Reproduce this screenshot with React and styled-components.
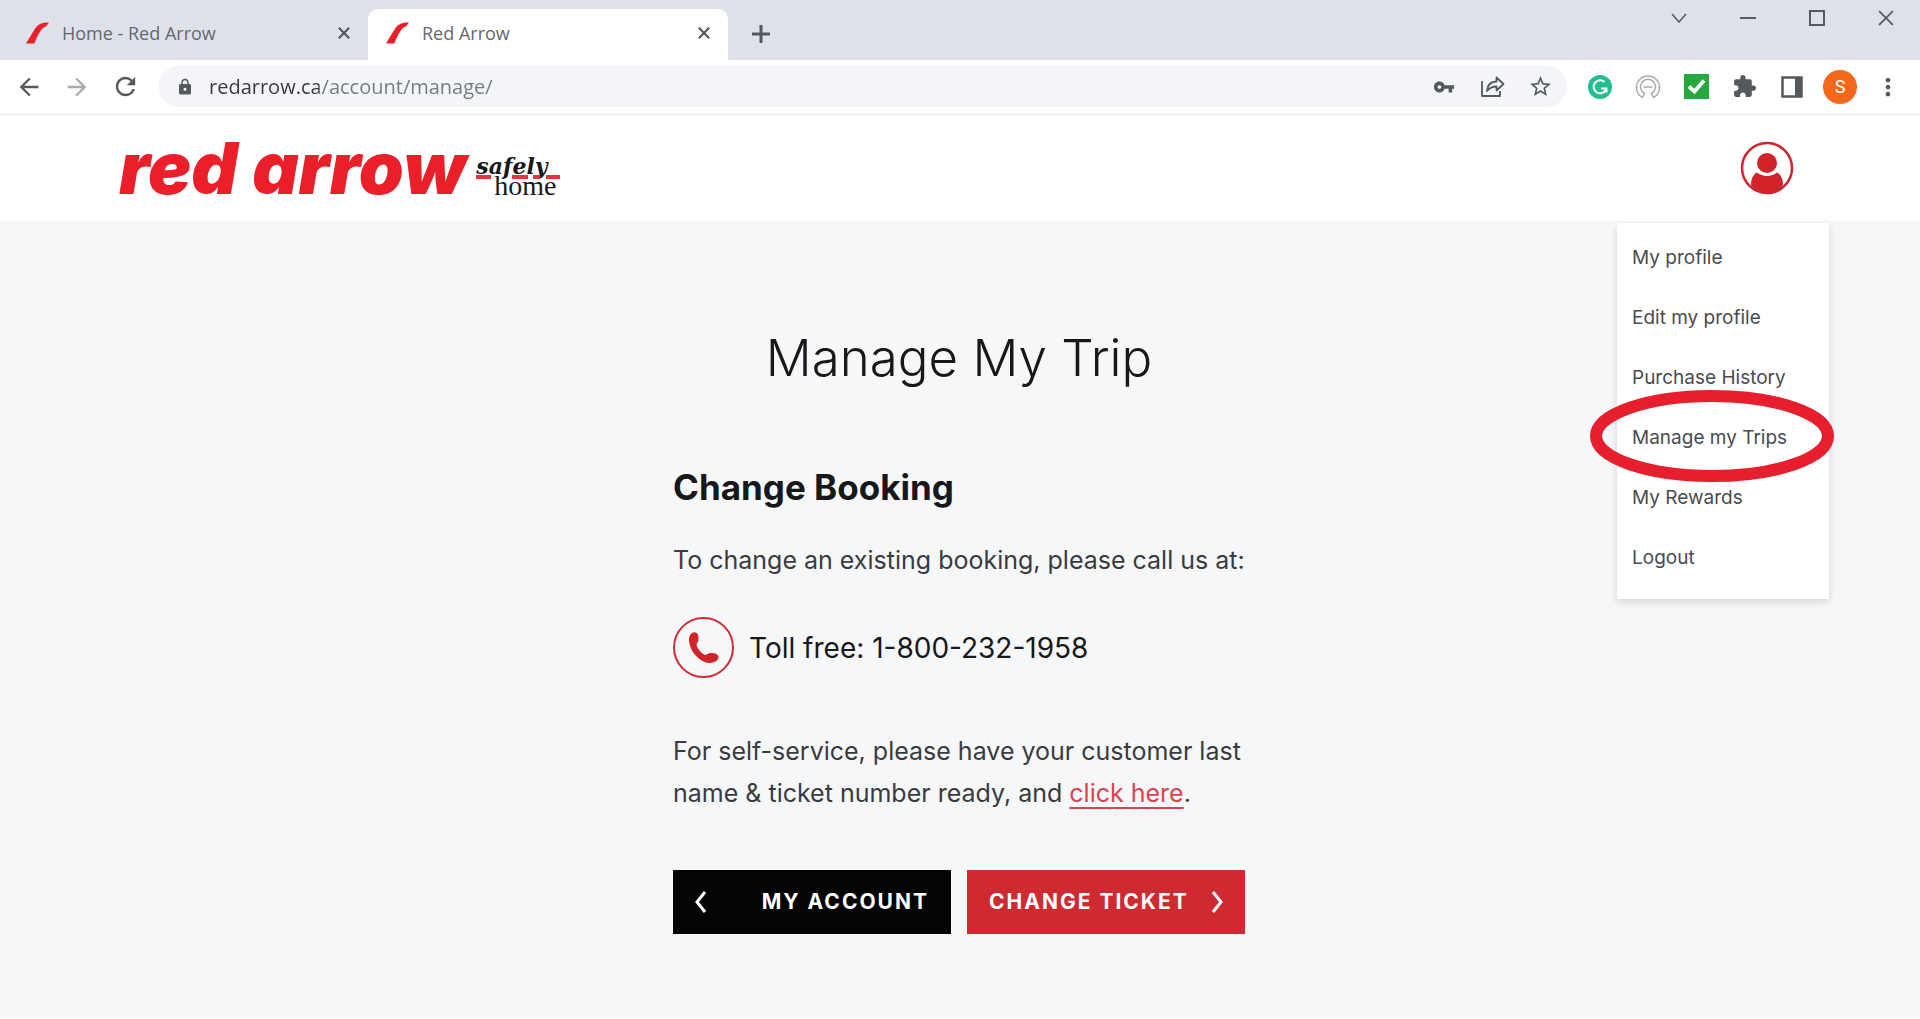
import React, {useState} from 'react';
import styled, {createGlobalStyle} from "styled-components";
import {MdArrowBack, MdArrowForward, MdExtension, MdLock, MdMoreVert, MdRefresh, MdStarBorder, MdVpnKey} from "react-icons/md";

const GlobalStyle = createGlobalStyle`
    * {
        box-sizing: border-box;
    }
    body {
        margin: 0;
        background: #ffffff;
        font-family: Inter, "Liberation Sans", sans-serif;
        color: #17181a;
    }
    button {
        border: 0;
        padding: 0;
        background: none;
        font: inherit;
        color: inherit;
        cursor: pointer;
    }
    svg {
        display: block;
        flex: none;
    }
`

const Page = styled.div`
    min-height: 100vh;
    padding-bottom: 1px;
    display: flex;
    flex-direction: column;
`

const TabStrip = styled.div`
    height: 60px;
    display: flex;
    align-items: flex-end;
    background: #dfe1ea;
    font-family: "Open Sans", sans-serif;
`

const BrowserTab = styled.div`
    width: ${p => p.$active ? "360px" : "368px"};
    height: 51px;
    padding: 0 17px 4px ${p => p.$active ? "18px" : "26px"};
    display: flex;
    align-items: center;
    gap: 12px;
    border-radius: 10px 10px 0 0;
    background: ${p => p.$active ? "#ffffff" : "transparent"};
`

const TabTitle = styled.button`
    flex: 1;
    text-align: left;
    font-size: 18px;
    line-height: 24px;
    color: #66686e;
`

const IconButton = styled.button`
    width: ${p => p.$width || 48}px;
    height: ${p => p.$height || 40}px;
    flex: none;
    display: flex;
    align-items: center;
    justify-content: center;
    color: ${p => p.$color || "#55585d"};
`

const WindowControls = styled.div`
    margin-left: auto;
    align-self: flex-start;
    display: flex;
`

const Toolbar = styled.div`
    height: 56px;
    padding: 0 8px 0 5px;
    display: flex;
    align-items: center;
    background: #ffffff;
    border-bottom: 3px solid #f2f3f5;
`

const AddressBar = styled.div`
    flex: 1;
    height: 41px;
    margin: 0 9px;
    padding: 0 3px 0 18px;
    display: flex;
    align-items: center;
    border-radius: 21px;
    background: #f3f5f8;
    color: #55585d;
`

const AddressInput = styled.input`
    flex: 1;
    min-width: 0;
    margin-left: 15px;
    border: 0;
    padding: 0;
    outline: none;
    font-family: "Open Sans", sans-serif;
    font-size: 20px;
    line-height: 30px;
    color: transparent;
    background: linear-gradient(90deg, #35373b 110px, #75787d 110px);
    -webkit-background-clip: text;
    background-clip: text;
`

const Initial = styled.span`
    width: 34px;
    height: 34px;
    display: flex;
    align-items: center;
    justify-content: center;
    border-radius: 50%;
    background: #f4681c;
    color: #ffffff;
    font-family: Roboto, sans-serif;
    font-size: 18px;
`

const Header = styled.header`
    position: relative;
    height: 105px;
    padding: 0 126px 2px 119px;
    display: flex;
    align-items: center;
    justify-content: space-between;
    background: #ffffff;
`

const Brand = styled.a`
    display: flex;
    align-items: flex-end;
    gap: 10px;
    text-decoration: none;
`

const Wordmark = styled.span`
    font-family: Inter, sans-serif;
    font-size: 72px;
    line-height: 84px;
    font-weight: 900;
    font-style: italic;
    color: #ea1f2a;
`

const Slogan = styled.span`
    position: relative;
    width: 84px;
    padding-bottom: 14px;
    display: flex;
    flex-direction: column;
    line-height: 20px;
    color: #17181a;
    svg {
        position: absolute;
        left: 0;
        top: 19px;
    }
`

const SloganTop = styled.span`
    font-family: "DejaVu Serif", serif;
    font-size: 22px;
    font-weight: 700;
    font-style: italic;
`

const SloganBottom = styled.span`
    padding-left: 18px;
    font-family: "Liberation Serif", serif;
    font-size: 28px;
`

const Menu = styled.nav`
    position: absolute;
    top: 107px;
    right: 91px;
    width: 212px;
    padding: 4px 0 12px;
    background: #ffffff;
    box-shadow: 0 3px 8px rgba(0, 0, 0, 0.14);
`

const MenuLink = styled.a`
    position: relative;
    height: 60px;
    padding: 0 15px;
    display: flex;
    align-items: center;
    font-size: 19px;
    color: #4a4b4e;
    text-decoration: none;
    white-space: nowrap;
    svg {
        position: absolute;
        left: -27px;
        top: -17px;
    }
`

const Main = styled.main`
    flex: 1;
    display: flex;
    flex-direction: column;
    align-items: center;
    padding: 104px 26px 0 24px;
    background: #f6f7f9;
`

const Title = styled.h1`
    margin: 0;
    font-size: 51px;
    line-height: 66px;
    font-weight: 300;
`

const Content = styled.section`
    width: 572px;
    margin-top: 74px;
`

const Subtitle = styled.h2`
    margin: 0;
    font-size: 35px;
    line-height: 44px;
    font-weight: 700;
`

const Text = styled.p`
    margin: ${p => p.$top}px 0 0;
    font-size: 25px;
    line-height: 42px;
    color: #3a3b3e;
    a {
        color: #d9434f;
        text-underline-offset: 5px;
    }
`

const Phone = styled.div`
    margin-top: 36px;
    display: flex;
    align-items: center;
    gap: 15px;
    font-size: 28px;
    line-height: 42px;
`

const PhoneCircle = styled.span`
    width: 61px;
    height: 61px;
    display: flex;
    align-items: center;
    justify-content: center;
    border: 2px solid #d22a35;
    border-radius: 50%;
    color: #d2232a;
`

const Actions = styled.div`
    margin-top: 56px;
    display: grid;
    grid-template-columns: 1fr 1fr;
    gap: 16px;
`

const ActionButton = styled.button`
    height: 64px;
    padding: 0 22px;
    display: flex;
    align-items: center;
    justify-content: space-between;
    background: ${p => p.$primary ? "#cf2a31" : "#030405"};
    color: #ffffff;
    font-size: 21px;
    line-height: 28px;
    font-weight: 700;
    letter-spacing: 2px;
`

const Favicon = () => (
    <svg width="24" height="22" viewBox="0 0 24 22">
        <path d="M0 21.500h8.500c2-6 3.500-8.500 6-12.500 1.500-2.500 3.500-4 5.500-4.500L23 .5C16 0 11.500 2.500 8.500 7.500z" fill="#ea1f2a"/>
    </svg>
)

const Cross = ({size, weight}) => (
    <svg width={size} height={size} viewBox="0 0 14 14" fill="none" stroke="currentColor" strokeWidth={weight}>
        <path d="M1 1l12 12M13 1L1 13"/>
    </svg>
)

const Chevron = ({d}) => (
    <svg width="12" height="22" viewBox="0 0 12 22" fill="none" stroke="currentColor" strokeWidth="3">
        <path d={d}/>
    </svg>
)

const ShareIcon = () => (
    <svg width="25" height="22" viewBox="0 0 25 22" fill="none" stroke="currentColor" strokeWidth="1.800" strokeLinejoin="round">
        <path d="M2 5v15h18v-5"/>
        <path d="M7 15c.5-6 4-9.500 9.500-9.500V1.500L23.500 8l-7 6.500v-4C12.500 10.500 9.500 12 7 15z"/>
    </svg>
)

const GrammarIcon = () => (
    <svg width="24" height="24" viewBox="0 0 24 24" fill="none">
        <circle cx="12" cy="12" r="12" fill="#1fbf92"/>
        <path d="M16.500 7A6.500 6.500 0 1 0 18 14.500M13 13.500h5.500v4" stroke="#ffffff" strokeWidth="2"/>
    </svg>
)

const RingIcon = () => (
    <svg width="26" height="26" viewBox="0 0 26 26" fill="none" stroke="#a9abaf" strokeWidth="1.500">
        <path d="M7.500 23.500a11.500 11.500 0 1 1 11 0l-2-4a7.500 7.500 0 1 0-7 0z"/>
        <path d="M8.500 13h9"/>
    </svg>
)

const CheckIcon = () => (
    <svg width="25" height="25" viewBox="0 0 25 25" fill="none">
        <path d="M0 0h25v25H0z" fill="#25a83d"/>
        <path d="M5 12.500l5.500 5L20 6.500" stroke="#ffffff" strokeWidth="3.800"/>
    </svg>
)

const PanelIcon = () => (
    <svg width="22" height="22" viewBox="0 0 22 22" fill="none">
        <path d="M1.500 1.500h19v19h-19z" stroke="currentColor" strokeWidth="2.500"/>
        <path d="M14 1h7v20h-7z" fill="currentColor"/>
    </svg>
)

const UserIcon = () => (
    <svg width="54" height="54" viewBox="0 0 54 54">
        <circle cx="27" cy="27" r="25" fill="#ffffff" stroke="#cf2530" strokeWidth="2.500"/>
        <circle cx="27" cy="22" r="10" fill="#d2232a"/>
        <path d="M11 44c0-6 2-10.500 6-12.500 5 4.500 15 4.500 20 0 4 2 6 6.500 6 12.500-4 5.500-9.500 8.500-16 8.500s-12-3-16-8.500z" fill="#d2232a"/>
    </svg>
)

const HandsetIcon = () => (
    <svg width="32" height="34" viewBox="0 0 32 34" fill="currentColor">
        <path d="M2.500 3.500C4.500.5 9 .5 10 4c.8 3 .8 6.500-1 8.500-.8 1-.5 2 0 3 1.500 3.500 4 6.300 7 8 1 .6 2 .6 3-.2 2.500-1.800 6-1.800 9-.5 3.200 1.500 3.200 5 .5 7C25 32.500 19 33 13.500 29.500 6 24.500 1.500 17 1 9.500.9 7 1.300 5 2.500 3.500z"/>
    </svg>
)

const Marker = () => (
    <svg width="244" height="92" viewBox="0 0 244 92" fill="none">
        <ellipse cx="122" cy="46" rx="116" ry="40" stroke="#e61e2d" strokeWidth="12"/>
    </svg>
)

const links = ["My profile", "Edit my profile", "Purchase History", "Manage my Trips", "My Rewards", "Logout"]

const App = () => {
    const [url, setUrl] = useState("redarrow.ca/account/manage/")

    return (
        <Page>
            <GlobalStyle/>
            <TabStrip>
                <BrowserTab>
                    <Favicon/>
                    <TabTitle>Home - Red Arrow</TabTitle>
                    <IconButton $width={14} aria-label="Close tab"><Cross size={12} weight={2.5}/></IconButton>
                </BrowserTab>
                <BrowserTab $active>
                    <Favicon/>
                    <TabTitle>Red Arrow</TabTitle>
                    <IconButton $width={14} aria-label="Close tab"><Cross size={12} weight={2.5}/></IconButton>
                </BrowserTab>
                <IconButton $width={66} $height={51} aria-label="New tab">
                    <svg width="18" height="22" viewBox="0 0 18 22" fill="none" stroke="currentColor" strokeWidth="3">
                        <path d="M9 1v18M0 10h18"/>
                    </svg>
                </IconButton>
                <WindowControls>
                    <IconButton $width={69} $height={35} aria-label="Search tabs">
                        <svg width="16" height="10" viewBox="0 0 16 10" fill="none" stroke="currentColor" strokeWidth="1.500">
                            <path d="M1 1l7 8 7-8"/>
                        </svg>
                    </IconButton>
                    <IconButton $width={69} $height={35} aria-label="Minimize">
                        <svg width="16" height="2" viewBox="0 0 16 2"><path d="M0 0h16v2H0z" fill="currentColor"/></svg>
                    </IconButton>
                    <IconButton $width={69} $height={35} aria-label="Maximize">
                        <svg width="16" height="16" viewBox="0 0 16 16"><path d="M1 1h14v14H1z" fill="none" stroke="currentColor" strokeWidth="2"/></svg>
                    </IconButton>
                    <IconButton $width={69} $height={35} aria-label="Close"><Cross size={16} weight={1.5}/></IconButton>
                </WindowControls>
            </TabStrip>
            <Toolbar>
                <IconButton aria-label="Back"><MdArrowBack size={28}/></IconButton>
                <IconButton $color="#a9abaf" aria-label="Forward"><MdArrowForward size={28}/></IconButton>
                <IconButton aria-label="Reload"><MdRefresh size={29}/></IconButton>
                <AddressBar>
                    <MdLock size={18}/>
                    <AddressInput aria-label="Address" value={url} onChange={e => setUrl(e.target.value)}/>
                    <IconButton aria-label="Passwords"><MdVpnKey size={22}/></IconButton>
                    <IconButton aria-label="Share"><ShareIcon/></IconButton>
                    <IconButton aria-label="Bookmark"><MdStarBorder size={25}/></IconButton>
                </AddressBar>
                <IconButton aria-label="Grammar"><GrammarIcon/></IconButton>
                <IconButton aria-label="Recorder"><RingIcon/></IconButton>
                <IconButton aria-label="Checker"><CheckIcon/></IconButton>
                <IconButton aria-label="Extensions"><MdExtension size={25}/></IconButton>
                <IconButton aria-label="Side panel"><PanelIcon/></IconButton>
                <IconButton aria-label="Account"><Initial>S</Initial></IconButton>
                <IconButton aria-label="Menu"><MdMoreVert size={28}/></IconButton>
            </Toolbar>
            <Header>
                <Brand href="#home">
                    <Wordmark>red arrow</Wordmark>
                    <Slogan>
                        <svg width="84" height="4" viewBox="0 0 84 4" fill="#e8333c">
                            <path d="M0 0h15v4H0zM36 0h16v4H36zM57 0h7v4h-7zM70 0h14v4H70z"/>
                        </svg>
                        <SloganTop>safely</SloganTop>
                        <SloganBottom>home</SloganBottom>
                    </Slogan>
                </Brand>
                <IconButton $width={54} $height={54} aria-label="My account menu"><UserIcon/></IconButton>
                <Menu>
                    {links.map(label => (
                        <MenuLink href="#account" key={label}>
                            {label}
                            {label === "Manage my Trips" && <Marker/>}
                        </MenuLink>
                    ))}
                </Menu>
            </Header>
            <Main>
                <Title>Manage My Trip</Title>
                <Content>
                    <Subtitle>Change Booking</Subtitle>
                    <Text $top={30}>To change an existing booking, please call us at:</Text>
                    <Phone>
                        <PhoneCircle><HandsetIcon/></PhoneCircle>
                        Toll free: 1-800-232-1958
                    </Phone>
                    <Text $top={52}>
                        For self-service, please have your customer last
                        name & ticket number ready, and <a href="#change">click here</a>.
                    </Text>
                    <Actions>
                        <ActionButton>
                            <Chevron d="M10 1L2 11l8 10"/>
                            MY ACCOUNT
                        </ActionButton>
                        <ActionButton $primary>
                            CHANGE TICKET
                            <Chevron d="M2 1l8 10-8 10"/>
                        </ActionButton>
                    </Actions>
                </Content>
            </Main>
        </Page>
    );
};

export default App;
